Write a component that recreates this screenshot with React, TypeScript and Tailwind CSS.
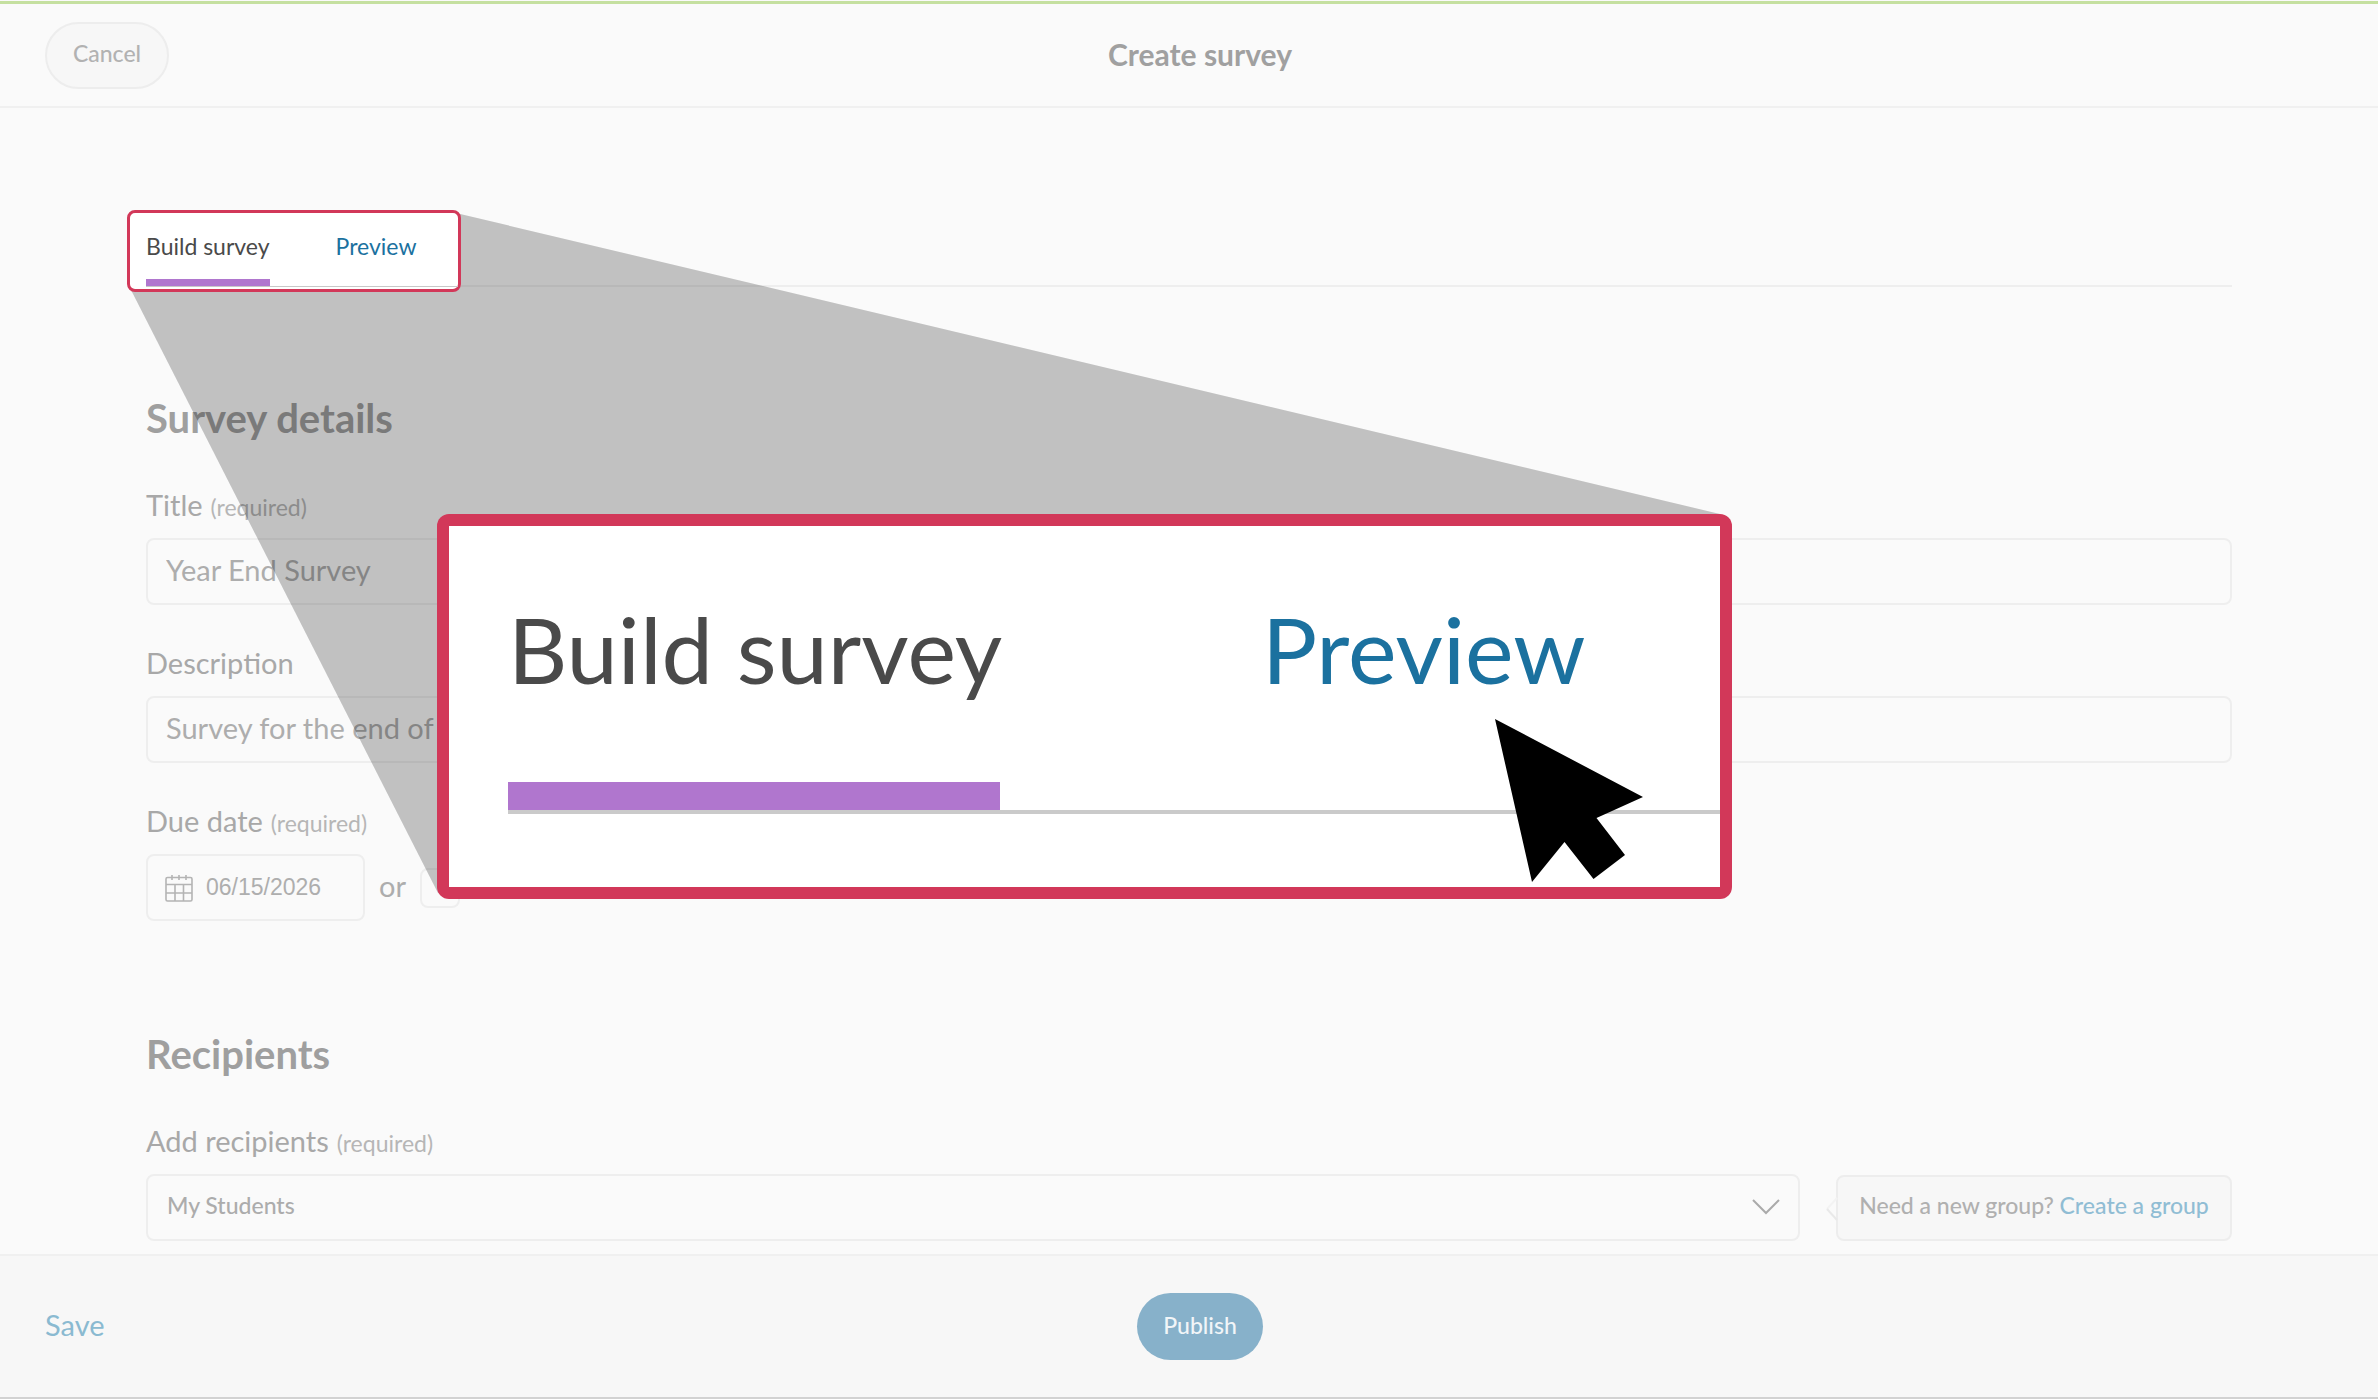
import { useState } from "react";
import type { ReactNode } from "react";

type Tab = "build" | "preview";

const TABS: { id: Tab; label: string }[] = [
    { id: "build", label: "Build survey" },
    { id: "preview", label: "Preview" },
];

function CalendarIcon() {
    return (
        <svg className="h-[28px] w-[28px] shrink-0" viewBox="0 0 28 28" fill="none" stroke="#b4b4b4" strokeWidth="1.6" aria-hidden="true">
            <rect x="1" y="3.5" width="26" height="23.5" rx="1.5" />
            <path d="M1 10.5h26M1 19h26M10 10.5V27M18.5 10.5V27M7 1v5M14 1v5M21 1v5" />
        </svg>
    );
}

function CursorIcon() {
    return (
        <svg className="absolute left-[1058px] top-[205px] h-[163px] w-[148px]" viewBox="0 0 148 163" aria-hidden="true">
            <path d="M0 0 148 78 101.500 99 130 136 98.500 160 69.500 123 37 163Z" fill="#000" />
        </svg>
    );
}

function FieldLabel({ htmlFor, required, children }: { htmlFor: string; required?: boolean; children: ReactNode }) {
    return (
        <label htmlFor={htmlFor} className="mb-[16px] flex h-[34px] items-baseline gap-[8px] text-[29px] leading-[34px] text-[#a8a8a8]">
            {children}
            {required && <span className="text-[23px] text-[#b6b6b6]">(required)</span>}
        </label>
    );
}

function SectionTitle({ children }: { children: ReactNode }) {
    return <h2 className="mb-[48px] text-[40px] font-bold leading-[44px] text-[#9f9f9f]">{children}</h2>;
}

// Enlarged copy of the tabs, joined to them by the grey beam
function Callout() {
    return (
        <>
            <svg className="pointer-events-none absolute left-0 top-0 z-10 h-[900px] w-[1740px]" viewBox="0 0 1740 900" aria-hidden="true">
                <path d="M131 290 456 213 1720 514 1720 893H438Z" fill="#000" fillOpacity="0.228" />
            </svg>
            <div className="absolute left-[437px] top-[514px] z-20 h-[385px] w-[1295px] rounded-xl bg-[#d23859] p-[12px]">
                <div className="h-full bg-white pl-[59px] pt-[63px]">
                    <div className="flex h-[225px] border-b-4 border-[#cacaca] text-[92px] leading-[120px]">
                        <div className="w-[492px] shrink-0 border-b-[28px] border-[#b076ce] whitespace-nowrap text-[#4a4a4a]">Build survey</div>
                        <div className="ml-[262px] text-[#1b719f]">Preview</div>
                    </div>
                </div>
                <CursorIcon />
            </div>
        </>
    );
}

function App() {
    const [tab, setTab] = useState<Tab>("build");
    const [title, setTitle] = useState("Year End Survey");
    const [description, setDescription] = useState("Survey for the end of the year");
    const [dueDate, setDueDate] = useState("06/15/2026");

    return (
        <div className="relative flex min-h-screen flex-col overflow-hidden border-b-2 border-[#d2d2d2] bg-[#fafafa] font-['Lato','Liberation_Sans',sans-serif]">
            <header className="mt-px grid h-[107px] grid-cols-[1fr_auto_1fr] items-center border-b-2 border-t-[3px] border-b-[#f0f0f0] border-t-[#c5e0a0] pl-[45px] pr-[23px]">
                <button type="button" className="h-[67px] w-[124px] rounded-full border-2 border-[#ededed] bg-[#f7f7f7] pb-[3px] text-[23px] font-medium text-[#b2b2b2]">
                    Cancel
                </button>
                <h1 className="pb-[3px] text-[30px] font-bold leading-[36px] text-[#a0a0a0]">Create survey</h1>
            </header>

            <main className="px-[146px] pb-[13px] pt-[102px]">
                <nav className="mb-[104px] flex">
                    <div className="relative z-20 -ml-[19px] h-[82px] w-[334px] rounded-lg border-[3px] border-[#d23859] bg-white pl-[16px]">
                        <div className="flex h-[74px] gap-[66px] border-b border-[#c8c8c8] text-[23px]">
                            {TABS.map(({ id, label }) => (
                                <button
                                    key={id}
                                    type="button"
                                    onClick={() => setTab(id)}
                                    className={`border-b-[7px] whitespace-nowrap ${tab === id ? "border-[#b076ce] text-[#4a4a4a]" : "border-transparent text-[#1b719f]"}`}
                                >
                                    {label}
                                </button>
                            ))}
                        </div>
                    </div>
                    <div className="h-[77px] flex-1 border-b-2 border-[#eeeeee]" />
                </nav>

                <section>
                    <SectionTitle>Survey details</SectionTitle>
                    <div className="space-y-[41px]">
                        <div>
                            <FieldLabel htmlFor="title" required>Title</FieldLabel>
                            <input
                                id="title"
                                value={title}
                                onChange={(e) => setTitle(e.target.value)}
                                className="block h-[67px] w-full rounded-lg border-2 border-[#eeeeee] px-[18px] pb-[4px] text-[29px] text-[#adadad]"
                            />
                        </div>
                        <div>
                            <FieldLabel htmlFor="description">Description</FieldLabel>
                            <input
                                id="description"
                                value={description}
                                onChange={(e) => setDescription(e.target.value)}
                                className="block h-[67px] w-full rounded-lg border-2 border-[#eeeeee] px-[18px] pb-[4px] text-[29px] text-[#adadad]"
                            />
                        </div>
                        <div>
                            <FieldLabel htmlFor="due-date" required>Due date</FieldLabel>
                            <div className="flex items-center">
                                <div className="flex h-[67px] w-[219px] items-center gap-[13px] rounded-lg border-2 border-[#eeeeee] pl-[17px]">
                                    <CalendarIcon />
                                    <input
                                        id="due-date"
                                        value={dueDate}
                                        onChange={(e) => setDueDate(e.target.value)}
                                        className="w-[130px] font-['Liberation_Sans',sans-serif] text-[23px] text-[#aeaeae]"
                                    />
                                </div>
                                <span className="mx-[14px] pb-[3px] text-[29px] leading-[34px] text-[#adadad]">or</span>
                                <input
                                    type="checkbox"
                                    aria-label="No due date"
                                    className="h-[40px] w-[40px] appearance-none rounded-lg border-2 border-[#eeeeee]"
                                />
                            </div>
                        </div>
                    </div>
                </section>

                <section className="mt-[111px]">
                    <SectionTitle>Recipients</SectionTitle>
                    <FieldLabel htmlFor="recipients" required>Add recipients</FieldLabel>
                    <div className="flex items-center gap-[36px]">
                        <div className="relative flex-1">
                            <select
                                id="recipients"
                                className="block h-[67px] w-full appearance-none rounded-lg border-2 border-[#eeeeee] px-[19px] pb-[4px] text-[23px] font-medium text-[#acacac]"
                            >
                                <option>My Students</option>
                            </select>
                            <svg className="pointer-events-none absolute right-[20px] top-[25px] h-[16px] w-[28px]" viewBox="0 0 28 16" fill="none" stroke="#aaaaaa" strokeWidth="2" aria-hidden="true">
                                <path d="M1 1 14 14 27 1" />
                            </svg>
                        </div>
                        <div className="relative flex h-[66px] w-[396px] items-center justify-center rounded-lg border-2 border-[#ededed] bg-[#f7f7f7] pb-[4px] text-[23px] font-medium whitespace-pre text-[#b0b0b0]">
                            <svg className="absolute -left-[12px] top-[20px] h-[24px] w-[12px]" viewBox="0 0 12 24" fill="none" strokeWidth="2" aria-hidden="true">
                                <path d="M11 1 1 12" stroke="#f3f3f3" />
                                <path d="M1 12 11 23" stroke="#e9e9e9" />
                            </svg>
                            Need a new group? <a href="#create-group" className="text-[#90bdd4]">Create a group</a>
                        </div>
                    </div>
                </section>
            </main>

            <footer className="grid flex-1 grid-cols-[1fr_auto_1fr] items-center border-t-2 border-[#f0f0f0] bg-[#f7f7f7] pl-[45px] pr-[23px]">
                <button type="button" className="justify-self-start pb-[3px] text-[29px] leading-[34px] text-[#8abad1]">
                    Save
                </button>
                <button type="button" className="h-[67px] w-[126px] rounded-full bg-[#87b1ca] pb-[3px] text-[23px] font-medium text-[#f1f5f8]">
                    Publish
                </button>
            </footer>

            <Callout />
        </div>
    );
}

export default App;
